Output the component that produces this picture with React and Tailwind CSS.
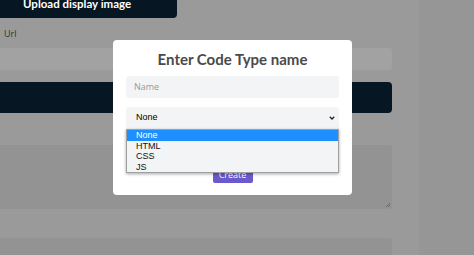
export default function App() {
  const options = ["None", "HTML", "CSS", "JS"];

  return (
    <div className="relative w-[474px] h-[255px] overflow-hidden bg-[#9a9a9a] font-['Open_Sans',sans-serif]">
      {/* page behind the overlay */}
      <div className="flex h-full">
        <div className="w-[392px] flex flex-col [&>*]:shrink-0">
          <div className="w-[177px] h-[18px] bg-[#061623] rounded-br-[4px] flex items-start pl-[23px] overflow-hidden">
            <span className="text-white font-bold text-[11.5px] leading-[14px] -mt-[3px] font-['Lato',sans-serif]">
              Upload display image
            </span>
          </div>
          <div className="mt-[10px] pl-[4px] text-[9px] leading-[12px] text-[#333]">Url</div>
          <div className="mt-[8px] h-[22px] bg-[#a2a2a2] rounded-r-[3px]"></div>
          <div className="mt-[12px] h-[31px] bg-[#061623] rounded-r-[4px]"></div>
          <div className="relative mt-[32px] h-[64px] bg-[#939393] rounded-r-[3px]">
            <svg className="absolute right-[1px] bottom-[1px]" width="6" height="6" viewBox="0 0 6 6">
              <path d="M5 1L1 5M5 3L3 5" stroke="#6a6a6a" strokeWidth="1" />
            </svg>
          </div>
          <div className="mt-[29px] h-[30px] bg-[#939393] rounded-r-[3px]"></div>
        </div>
        <div className="w-[27px]"></div>
        <div className="flex-1 bg-[#969696]"></div>
      </div>

      {/* modal */}
      <div className="absolute left-[113px] top-[40px] w-[239px] h-[155px] bg-white rounded-[4px] px-[13px] pt-[10px] flex flex-col">
        <h2 className="text-center text-[15px] leading-[18px] font-bold text-[#4a4a4a] font-['Lato',sans-serif]">
          Enter Code Type name
        </h2>
        <div className="mt-[8px] h-[22px] bg-[#f3f4f6] rounded-[3px] flex items-center pl-[8px] text-[9px] text-[#999]">
          Name
        </div>
        <div className="mt-[9px] h-[22px] bg-[#f3f4f6] rounded-t-[3px] flex items-center justify-between pl-[10px] pr-[4px] text-[9px] text-black font-['Liberation_Sans',sans-serif]">
          <span>None</span>
          <svg width="6" height="4" viewBox="0 0 6 4">
            <path d="M0.8 0.8L3 3L5.2 0.8" fill="none" stroke="#222" strokeWidth="1.3" />
          </svg>
        </div>
        <button className="mt-[34px] self-center w-[40px] h-[20px] bg-[#6a5acd] rounded-[2px] text-white text-[9px] leading-[10px] pt-[4px]">
          Create
        </button>

        {/* open select list */}
        <div className="absolute left-[13px] top-[89px] w-[213px] h-[44px] bg-[#f3f4f6] border border-[#a0a0a0] shadow-[0_1px_3px_rgba(0,0,0,0.35)] flex flex-col font-['Liberation_Sans',sans-serif] text-[9px]">
          {options.map((o, i) => (
            <div
              key={o}
              className={
                i === 0
                  ? "h-[10.5px] leading-[10.5px] pl-[9px] bg-[#1e8fff] text-white"
                  : "h-[10.5px] leading-[10.5px] pl-[9px] text-[#111]"
              }
            >
              {o}
            </div>
          ))}
        </div>
      </div>
    </div>
  );
}
